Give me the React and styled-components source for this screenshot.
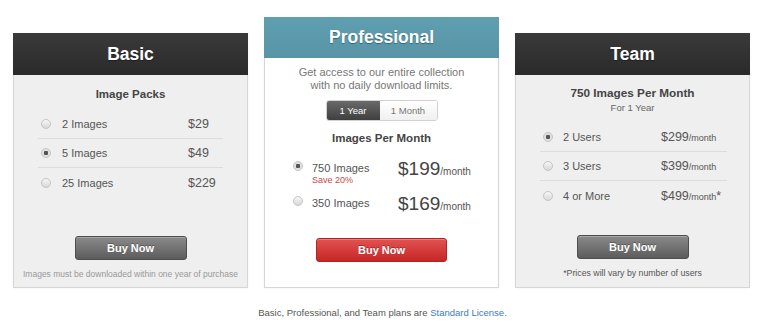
import React from "react";
import styled, { createGlobalStyle, css } from "styled-components";

const GlobalStyle = createGlobalStyle`
  html, body {
    margin: 0;
    padding: 0;
    background: #ffffff;
    font-family: "Liberation Sans", Arial, sans-serif;
  }
`;

const basicRows = [
  { label: "2 Images", price: "$29" },
  { label: "5 Images", price: "$49", checked: true },
  { label: "25 Images", price: "$229" },
];

const proRows = [
  { label: "750 Images", price: "$199", note: "Save 20%", checked: true },
  { label: "350 Images", price: "$169" },
];

const teamRows = [
  { label: "2 Users", price: "$299", checked: true },
  { label: "3 Users", price: "$399" },
  { label: "4 or More", price: "$499", star: true },
];

function App() {
  return (
    <Page>
      <GlobalStyle />
      <Cards>
        <Card $top={33}>
          <CardHeader>Basic</CardHeader>
          <CardBody>
            <SectionTitle>Image Packs</SectionTitle>
            <OptionList>
              {basicRows.map((row) => (
                <PackRow key={row.label}>
                  <Radio $checked={row.checked} />
                  <OptionLabel>{row.label}</OptionLabel>
                  <SmallPrice>{row.price}</SmallPrice>
                </PackRow>
              ))}
            </OptionList>
            <BuyButton>Buy Now</BuyButton>
            <FinePrint>Images must be downloaded within one year of purchase</FinePrint>
          </CardBody>
        </Card>

        <Card $top={17} $featured>
          <CardHeader $featured>Professional</CardHeader>
          <CardBody $featured>
            <Description>
              Get access to our entire collection
              <br />
              with no daily download limits.
            </Description>
            <Toggle>
              <ToggleOption $active>1 Year</ToggleOption>
              <ToggleOption>1 Month</ToggleOption>
            </Toggle>
            <SectionTitle $pro>Images Per Month</SectionTitle>
            <ProList>
              {proRows.map((row) => (
                <ProRow key={row.label}>
                  <Radio $checked={row.checked} />
                  <ProLabel>
                    {row.label}
                    {row.note && <SaveNote>{row.note}</SaveNote>}
                  </ProLabel>
                  <BigPrice>
                    {row.price}
                    <PerMonth>/month</PerMonth>
                  </BigPrice>
                </ProRow>
              ))}
            </ProList>
            <BuyButton $red>Buy Now</BuyButton>
          </CardBody>
        </Card>

        <Card $top={33}>
          <CardHeader>Team</CardHeader>
          <CardBody>
            <SectionTitle $team>750 Images Per Month</SectionTitle>
            <SubTitle>For 1 Year</SubTitle>
            <OptionList $team>
              {teamRows.map((row) => (
                <TeamRow key={row.label}>
                  <Radio $checked={row.checked} />
                  <OptionLabel>{row.label}</OptionLabel>
                  <SmallPrice>
                    {row.price}
                    <TeamMonth>/month</TeamMonth>
                    {row.star && "*"}
                  </SmallPrice>
                </TeamRow>
              ))}
            </OptionList>
            <BuyButton>Buy Now</BuyButton>
            <FinePrint $team>*Prices will vary by number of users</FinePrint>
          </CardBody>
        </Card>
      </Cards>
      <Footer>
        Basic, Professional, and Team plans are <FooterLink href="#">Standard License.</FooterLink>
      </Footer>
    </Page>
  );
}

export default App;

const Page = styled.div`
  width: 765px;
  height: 326px;
  overflow: hidden;
  background: #ffffff;
`;

const Cards = styled.div`
  display: flex;
  align-items: flex-start;
  gap: 16px;
  padding-left: 13px;
`;

const Card = styled.div`
  width: 235px;
  margin-top: ${(p) => p.$top}px;
  height: ${(p) => 288 - p.$top}px;
  display: flex;
  flex-direction: column;
  box-sizing: border-box;
  border: 1px solid #d6d6d6;
  box-shadow: 0 0 2px rgba(0, 0, 0, 0.06);
`;

const CardHeader = styled.div`
  height: ${(p) => (p.$featured ? 41 : 42)}px;
  display: flex;
  align-items: center;
  justify-content: center;
  margin: -1px -1px 0;
  color: #ffffff;
  font-size: 17.5px;
  font-weight: 700;
  text-shadow: 0 1px 1px rgba(0, 0, 0, 0.35);
  background: ${(p) =>
    p.$featured
      ? "linear-gradient(#5f9fb0, #5794a6)"
      : "linear-gradient(#3a3a3a, #2a2a2a)"};
`;

const CardBody = styled.div`
  flex: 1;
  display: flex;
  flex-direction: column;
  align-items: center;
  background: ${(p) => (p.$featured ? "#ffffff" : "#efefef")};
`;

const SectionTitle = styled.div`
  margin-top: ${(p) => (p.$pro ? 10 : p.$team ? 11 : 12)}px;
  font-size: ${(p) => (p.$team ? 11.75 : 11.5)}px;
  line-height: 14px;
  font-weight: 700;
  color: #444;
`;

const SubTitle = styled.div`
  margin-top: 1px;
  font-size: 9.5px;
  line-height: 13px;
  color: #666;
`;

const OptionList = styled.div`
  align-self: stretch;
  margin: ${(p) => (p.$team ? "9px 22px 0 24px" : "9px 24px 0 24px")};
`;

const rowBase = css`
  display: grid;
  align-items: center;
  height: 28px;
  border-bottom: 1px solid #dcdcdc;
  &:last-child {
    border-bottom: none;
  }
  &:last-child {
    height: 29px;
  }
`;

const PackRow = styled.div`
  ${rowBase}
  grid-template-columns: 21px 1fr 35px;
  padding-left: 3px;
`;

const TeamRow = styled.div`
  ${rowBase}
  grid-template-columns: 20px 1fr 66px;
  padding-left: 3px;
`;

const Radio = styled.span`
  width: 10px;
  height: 10px;
  box-sizing: border-box;
  border-radius: 50%;
  border: 1px solid #c4c4c4;
  background: ${(p) =>
    p.$checked
      ? "radial-gradient(circle, #555 0 2px, #e0e0e0 2.5px)"
      : "linear-gradient(#f7f7f7, #d8d8d8)"};
`;

const OptionLabel = styled.span`
  font-size: 11px;
  color: #555;
`;

const SmallPrice = styled.span`
  font-size: 12.5px;
  color: #555;
  white-space: nowrap;
`;

const TeamMonth = styled.span`
  font-size: 9px;
`;

const Description = styled.div`
  margin-top: 8px;
  font-size: 11px;
  line-height: 13px;
  color: #777;
  text-align: center;
`;

const Toggle = styled.div`
  display: flex;
  margin-top: 8px;
  height: 21px;
  box-sizing: border-box;
  border: 1px solid #d2d2d2;
  border-radius: 3px;
  overflow: hidden;
`;

const ToggleOption = styled.div`
  display: flex;
  align-items: center;
  justify-content: center;
  width: ${(p) => (p.$active ? 53 : 57)}px;
  font-size: 9.5px;
  color: ${(p) => (p.$active ? "#ffffff" : "#777")};
  background: ${(p) =>
    p.$active
      ? "linear-gradient(#6a6a6a, #3f3f3f)"
      : "linear-gradient(#ffffff, #f0f0f0)"};
`;

const ProList = styled.div`
  align-self: stretch;
  margin: 16px 24px 0 28px;
  display: flex;
  flex-direction: column;
  gap: 10px;
`;

const ProRow = styled.div`
  display: grid;
  grid-template-columns: 19px 86px 1fr;
  align-items: start;
`;

const ProLabel = styled.div`
  font-size: 11px;
  line-height: 14px;
  color: #555;
  display: flex;
  flex-direction: column;
`;

const SaveNote = styled.span`
  font-size: 9px;
  line-height: 11px;
  color: #c8474a;
`;

const BigPrice = styled.div`
  font-size: 19px;
  line-height: 16px;
  color: #444;
  white-space: nowrap;
`;

const PerMonth = styled.span`
  font-size: 10px;
  color: #555;
`;

const BuyButton = styled.button`
  margin-top: auto;
  margin-bottom: ${(p) => (p.$red ? 25 : 9)}px;
  width: ${(p) => (p.$red ? 131 : 112)}px;
  height: 24px;
  border-radius: 3px;
  border: 1px solid ${(p) => (p.$red ? "#b52222" : "#4e4e4e")};
  font-family: inherit;
  font-size: 11px;
  font-weight: 700;
  color: #ffffff;
  text-shadow: 0 -1px 0 rgba(0, 0, 0, 0.3);
  background: ${(p) =>
    p.$red
      ? "linear-gradient(#e25252, #c62626)"
      : "linear-gradient(#8a8a8a, #5c5c5c)"};
  box-shadow: inset 0 1px 0 rgba(255, 255, 255, 0.25);
`;

const FinePrint = styled.div`
  margin-bottom: ${(p) => (p.$team ? 8 : 7)}px;
  font-size: ${(p) => (p.$team ? 8.75 : 8.5)}px;
  line-height: 11px;
  color: ${(p) => (p.$team ? "#555" : "#999")};
`;

const Footer = styled.div`
  margin-top: 19px;
  text-align: center;
  font-size: 9.5px;
  color: #555;
`;

const FooterLink = styled.a`
  color: #3a7dbf;
  text-decoration: none;
`;
